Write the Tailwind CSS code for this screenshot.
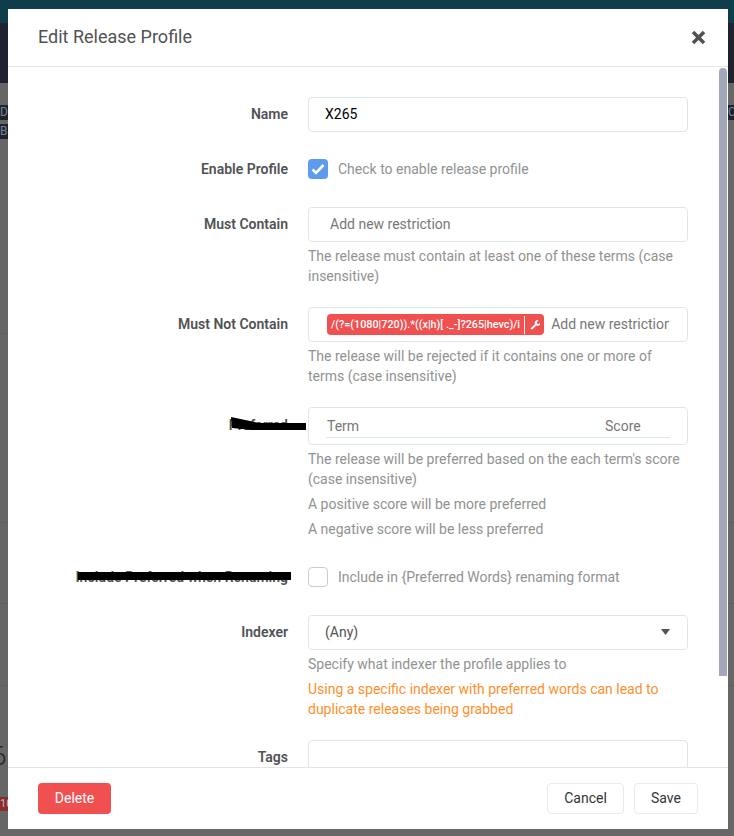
<!DOCTYPE html>
<html lang="en">
<head>
    <meta charset="UTF-8">
    <title>Edit Release Profile</title>
    <script src="https://cdn.jsdelivr.net/npm/@tailwindcss/browser@4"></script>
</head>
<body class="relative w-[734px] h-[836px] overflow-hidden bg-[#666666] font-['Roboto',sans-serif] text-sm text-[#515253]">

    <!-- dimmed page behind the modal -->
    <div class="h-[23px] bg-[#0f3d4c]"></div>
    <div class="h-[60px] bg-[#1f2330]"></div>
    <div class="absolute left-0 top-[105px] h-[15px] w-2 bg-[#1f2330] text-xs leading-[15px] text-[#7a8090]">D</div>
    <div class="absolute left-0 top-[124px] h-[15px] w-2 bg-[#1f2330] text-xs leading-[15px] text-[#7a8090]">B</div>
    <div class="absolute right-0 top-[105px] h-[15px] w-[6px] overflow-hidden bg-[#1f2330] text-xs leading-[15px] text-[#7a8090]">C</div>
    <div class="absolute left-0 top-[333px] h-px w-2 bg-[#5e5e5e]"></div>
    <div class="absolute left-0 top-[522px] h-px w-2 bg-[#5e5e5e]"></div>
    <div class="absolute left-0 top-[603px] h-px w-2 bg-[#5e5e5e]"></div>
    <div class="absolute left-0 top-[685px] h-px w-2 bg-[#5e5e5e]"></div>
    <div class="absolute right-0 top-[522px] h-px w-[6px] bg-[#5e5e5e]"></div>
    <div class="absolute right-0 top-[603px] h-px w-[6px] bg-[#5e5e5e]"></div>
    <div class="absolute right-0 top-[685px] h-px w-[6px] bg-[#5e5e5e]"></div>
    <div class="absolute left-[-8px] top-[738px] text-[26px] font-light text-[#222]">6</div>
    <div class="absolute left-0 top-[797px] h-[14px] w-2 overflow-hidden bg-[#8e2a2a] text-[11px] leading-[14px] text-[#bbb]">10</div>

    <!-- modal -->
    <div class="absolute left-2 top-[9px] flex h-[820px] w-[720px] flex-col bg-white">
        <div class="flex h-[58px] shrink-0 items-center justify-between border-b border-[#e5e5e5] pb-px pl-[30px] pr-[22px]">
            <h1 class="text-lg text-[#515253]">Edit Release Profile</h1>
            <svg class="h-[15px] w-[15px]" viewBox="0 0 15 15"><path d="M2 2l11 11M13 2L2 13" stroke="#515253" stroke-width="3.6" fill="none"/></svg>
        </div>

        <div class="relative flex-1 overflow-hidden pt-[30px]">
            <div class="absolute right-[1px] top-[1px] h-[608px] w-2 rounded-t bg-[#a3a7ba]"></div>

            <div class="flex h-[35px]">
                <label class="w-[280px] pt-[7px] text-right font-semibold">Name</label>
                <div class="ml-5 flex h-[35px] w-[380px] items-center rounded border border-[#dde6e9] pb-[2px] pl-4 text-black">X265</div>
            </div>

            <div class="mt-5 flex h-[35px]">
                <label class="w-[280px] pt-[7px] text-right font-semibold">Enable Profile</label>
                <div class="ml-5 flex items-center self-start pt-[7px]">
                    <span class="flex h-5 w-5 items-center justify-center rounded-sm bg-[#5d9cec]">
                        <svg class="h-[14px] w-[14px]" viewBox="0 0 14 14"><path d="M1.500 7.500l3.500 3.500 7.500-8" stroke="#fff" stroke-width="2.600" fill="none"/></svg>
                    </span>
                    <span class="ml-[10px] text-[#909293]">Check to enable release profile</span>
                </div>
            </div>

            <div class="mt-5 flex">
                <label class="w-[280px] pt-[7px] text-right font-semibold">Must Contain</label>
                <div class="ml-5 w-[380px]">
                    <div class="flex h-[35px] items-center rounded border border-[#dde6e9] pb-[2px] pl-[21px] text-[#777]">Add new restriction</div>
                    <p class="mt-1 leading-5 text-[#909293]">The release must contain at least one of these terms (case insensitive)</p>
                </div>
            </div>

            <div class="mt-[21px] flex">
                <label class="w-[280px] pt-[7px] text-right font-semibold">Must Not Contain</label>
                <div class="ml-5 w-[380px]">
                    <div class="flex h-[35px] items-center whitespace-nowrap rounded border border-[#dde6e9] pl-[18px] text-[#777]">
                        <span class="flex h-[21px] items-center rounded-sm bg-[#f05050] pl-1 pr-1 text-[10.8px] font-medium text-white">/(?=(1080|720)).*((x|h)[ ._-]?265|hevc)/i<span class="mx-1 h-[18px] w-px bg-white"></span><svg class="h-[11px] w-[11px]" viewBox="0 0 12 12"><path d="M1.500 10.500l5-5a3 3 0 0 1 4-4L8.500 3.500l.5 1.500 1.500.5 2-1.500a3 3 0 0 1-4.500 3l-4.500 4.500z" fill="#fff"/></svg></span>
                        <span class="ml-[7px] w-[118px] overflow-hidden pb-[2px]">Add new restriction</span>
                    </div>
                    <p class="mt-1 leading-5 text-[#909293]">The release will be rejected if it contains one or more of terms (case insensitive)</p>
                </div>
            </div>

            <div class="mt-[21px] flex">
                <label class="relative w-[280px] pt-2 text-right font-semibold">Preferred
                    <svg class="absolute left-[223px] top-[7px] h-[20px] w-[75px]" viewBox="0 0 75 20"><path d="M0 3l28 6h47v7H20l-19-2z" fill="#000"/></svg>
                </label>
                <div class="ml-5 w-[380px]">
                    <div class="h-[38px] rounded border border-[#dde6e9] px-[17px] pt-2 text-[#777]">
                        <div class="flex h-[22px] border-b border-[#dde6e9] pl-px">
                            <span class="w-[278px]">Term</span><span>Score</span>
                        </div>
                    </div>
                    <p class="mt-1 leading-5 text-[#909293]">The release will be preferred based on the each term's score (case insensitive)</p>
                    <p class="mt-[5px] leading-5 text-[#909293]">A positive score will be more preferred</p>
                    <p class="mt-[5px] leading-5 text-[#909293]">A negative score will be less preferred</p>
                </div>
            </div>

            <div class="mt-[21px] flex h-[35px]">
                <label class="relative w-[280px] pt-[7px] text-right font-semibold">Include Preferred when Renaming
                    <span class="absolute left-[70px] top-[12px] h-[8px] w-[213px] bg-black"></span>
                </label>
                <div class="ml-5 flex items-center self-start pt-[7px]">
                    <span class="h-5 w-5 rounded-sm border border-[#c8cdd0]"></span>
                    <span class="ml-[10px] text-[#909293]">Include in {Preferred Words} renaming format</span>
                </div>
            </div>

            <div class="mt-5 flex">
                <label class="w-[280px] pt-[7px] text-right font-semibold">Indexer</label>
                <div class="ml-5 w-[380px]">
                    <div class="flex h-[35px] items-center justify-between rounded border border-[#dde6e9] pb-[2px] pl-4 pr-[17px] text-[#515253]">
                        (Any)
                        <svg class="h-[6px] w-[9px]" viewBox="0 0 9 6"><path d="M0 0h9L4.500 6z" fill="#515253"/></svg>
                    </div>
                    <p class="mt-1 leading-5 text-[#909293]">Specify what indexer the profile applies to</p>
                    <p class="mt-[5px] leading-5 text-[#ff902b]">Using a specific indexer with preferred words can lead to duplicate releases being grabbed</p>
                </div>
            </div>

            <div class="mt-[21px] flex">
                <label class="w-[280px] pt-[7px] text-right font-semibold">Tags</label>
                <div class="ml-5 h-[35px] w-[380px] rounded border border-[#dde6e9]"></div>
            </div>
        </div>

        <div class="relative flex h-[62px] shrink-0 items-center justify-between border-t border-[#e5e5e5] bg-white px-[30px]">
            <button class="h-[31px] w-[73px] rounded bg-[#f05050] pb-px text-white">Delete</button>
            <div class="flex gap-[10px]">
                <button class="h-[31px] w-[77px] rounded border border-[#eaeaea] pb-px text-[#333]">Cancel</button>
                <button class="h-[31px] w-[64px] rounded border border-[#eaeaea] pb-px text-[#333]">Save</button>
            </div>
        </div>
    </div>
</body>
</html>
